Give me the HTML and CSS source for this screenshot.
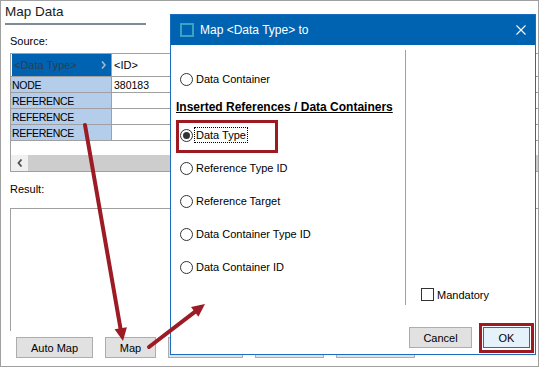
FILE: index.html
```html
<!DOCTYPE html>
<html>
<head>
<meta charset="utf-8">
<title>Map Data</title>
<link rel="stylesheet" href="styles.css">
</head>
<body>
<div class="window">
  <div class="win-title">Map Data</div>
  <div class="label source-label">Source:</div>
  <div class="grid">
    <div class="grid-row head">
      <div class="cell c1 sel">&lt;Data Type&gt;<svg class="chev" width="5" height="8" viewBox="0 0 5 8"><polyline points="1,0.5 4,4 1,7.5" fill="none" stroke="#a9b9cb" stroke-width="1.6"/></svg></div>
      <div class="cell c2">&lt;ID&gt;</div>
      <div class="cell c3">Type</div>
    </div>
    <div class="grid-row"><div class="cell c1 key">NODE</div><div class="cell c2">380183</div><div class="cell c3"></div></div>
    <div class="grid-row"><div class="cell c1 key">REFERENCE</div><div class="cell c2"></div><div class="cell c3"></div></div>
    <div class="grid-row"><div class="cell c1 key">REFERENCE</div><div class="cell c2"></div><div class="cell c3"></div></div>
    <div class="grid-row"><div class="cell c1 key">REFERENCE</div><div class="cell c2"></div><div class="cell c3"></div></div>
    <div class="grid-empty"></div>
    <div class="hscroll">
      <div class="hs-btn"><svg width="6" height="8" viewBox="0 0 6 8"><polyline points="4.5,0.5 1.5,4 4.5,7.5" fill="none" stroke="#505050" stroke-width="1.8"/></svg></div>
      <div class="hs-thumb"></div>
    </div>
  </div>
  <div class="label result-label">Result:</div>
  <div class="result-box"></div>
  <div class="btn-row">
    <button class="btn b-auto">Auto Map</button>
    <button class="btn b-map">Map</button>
    <button class="btn b-3"></button>
    <button class="btn b-4"></button>
    <button class="btn b-5"></button>
  </div>

  <div class="dialog">
    <div class="dlg-titlebar">
      <span class="dlg-icon"></span>
      <span class="dlg-title">Map &lt;Data Type&gt; to</span>
      <svg class="dlg-close" width="10" height="10" viewBox="0 0 10 10"><path d="M0.5 0.5 L9.5 9.5 M9.5 0.5 L0.5 9.5" stroke="#ffffff" stroke-width="1.1" fill="none"/></svg>
    </div>
    <div class="dlg-body">
      <div class="dlg-main">
        <div class="dlg-left">
          <div class="radio-row first"><span class="radio"></span><span class="rtext">Data Container</span></div>
          <div class="section-head">Inserted References / Data Containers</div>
          <div class="radio-row sel-row"><span class="radio checked"></span><span class="rtext focus">Data Type</span><span class="hl hl-radio"></span></div>
          <div class="radio-row"><span class="radio"></span><span class="rtext">Reference Type ID</span></div>
          <div class="radio-row"><span class="radio"></span><span class="rtext">Reference Target</span></div>
          <div class="radio-row"><span class="radio"></span><span class="rtext">Data Container Type ID</span></div>
          <div class="radio-row"><span class="radio"></span><span class="rtext">Data Container ID</span></div>
        </div>
        <div class="dlg-sep"></div>
        <div class="dlg-right">
          <div class="check-row"><span class="checkbox"></span><span class="rtext">Mandatory</span></div>
        </div>
      </div>
      <div class="dlg-foot">
        <button class="btn b-cancel">Cancel</button>
        <div class="ok-wrap"><button class="btn b-ok">OK</button><span class="hl hl-ok"></span></div>
      </div>
    </div>
  </div>

  <svg class="arrows" width="540" height="368" viewBox="0 0 540 368">
    <line x1="85" y1="125" x2="120.6" y2="329" stroke="#9c1b24" stroke-width="4" stroke-linecap="round"/>
    <polygon points="123,341 126.9,327.3 114.6,329.3" fill="#9c1b24"/>
    <line x1="149" y1="347" x2="195.5" y2="311.3" stroke="#9c1b24" stroke-width="4" stroke-linecap="round"/>
    <polygon points="205,304 198.4,316.8 191,307" fill="#9c1b24"/>
  </svg>
</div>
</body>
</html>
```

FILE: styles.css
```css
html, body {
  margin: 0;
  padding: 0;
  background: #ffffff;
}
body {
  font-family: "Liberation Sans", Arial, sans-serif;
  font-size: 11px;
  color: #000;
}
.window {
  position: relative;
  width: 539px;
  height: 367px;
  box-sizing: border-box;
  border: 1px solid #a0a0a0;
  background: #fff;
  overflow: hidden;
}
.win-title {
  margin: 3px 0 0 4px;
  width: 141px;
  font-size: 13.5px;
  line-height: 16px;
  padding-bottom: 3px;
  border-bottom: 2px solid #7d8a99;
  color: #1a1a1a;
}
.label {
  font-size: 11px;
  line-height: 13px;
  margin-left: 9px;
}
.source-label { margin-top: 10px; }
.result-label { margin-top: 11px; }

.grid {
  margin: 5px 0 0 9px;
  width: 528px;
  border-top: 1px solid #a0a0a0;
  border-left: 1px solid #a0a0a0;
  border-bottom: 1px solid #a0a0a0;
  font-size: 10.5px;
}
.grid-row {
  display: flex;
  height: 15px;
  border-bottom: 1px solid #a0a0a0;
}
.grid-row.head { height: 22px; font-size: 11px; }
.cell {
  display: flex;
  align-items: center;
  box-sizing: border-box;
  border-right: 1px solid #a0a0a0;
  padding-left: 1px;
  white-space: nowrap;
}
.c1 { width: 101px; }
.c1.key { letter-spacing: -0.3px; }
.c2 { width: 300px; padding-left: 2px; }
.c3 { flex: 1; padding-left: 3px; }
.cell.sel {
  background: #0063b1;
  color: #2b3c4e;
  padding-left: 2px;
  position: relative;
  border-left: 1px solid #fff;
}
.chev { position: absolute; right: 5px; top: 7px; }
.cell.key { background: #b4cdea; }
.grid-empty { height: 14px; }
.hscroll {
  display: flex;
  height: 16px;
}
.hs-btn {
  width: 17px;
  background: #f0f0f0;
  display: flex;
  align-items: center;
  justify-content: center;
}
.hs-thumb { flex: 1; background: #cdcdcd; }

.result-box {
  margin: 12px 0 0 9px;
  width: 528px;
  height: 123px;
  box-sizing: border-box;
  border-top: 1px solid #a0a0a0;
  border-left: 1px solid #a0a0a0;
}
.btn-row {
  display: flex;
  gap: 12px;
  margin-top: 6px;
  padding-left: 15px;
}
.btn {
  box-sizing: border-box;
  height: 21px;
  margin: 0;
  padding: 0;
  border: 1px solid #adadad;
  background: #e1e1e1;
  font-family: "Liberation Sans", Arial, sans-serif;
  font-size: 11px;
  color: #000;
}
.b-auto { width: 77px; }
.b-map { width: 51px; }
.b-3 { width: 75px; }
.b-4 { width: 69px; }
.b-5 { width: 79px; }

.dialog {
  position: absolute;
  left: 169px;
  top: 13px;
  width: 366px;
  height: 341px;
  box-sizing: border-box;
  border: 1px solid #1c6dbf;
  background: #fff;
  display: flex;
  flex-direction: column;
}
.dlg-titlebar {
  height: 30px;
  background: #0063b1;
  display: flex;
  align-items: center;
  padding: 0 9px;
  color: #fff;
}
.dlg-icon {
  width: 14px;
  height: 14px;
  box-sizing: border-box;
  border: 2px solid #3aa2c2;
  margin-top: -1px;
  margin-right: 6px;
}
.dlg-title {
  font-size: 12px;
  flex: 1;
}
.dlg-close { margin-top: -1px; }
.dlg-body {
  flex: 1;
  display: flex;
  flex-direction: column;
}
.dlg-main {
  display: flex;
  height: 264px;
}
.dlg-left {
  width: 234px;
  box-sizing: border-box;
  padding-left: 9px;
}
.radio-row {
  display: flex;
  align-items: center;
  height: 20px;
  margin-top: 13px;
  position: relative;
}
.radio-row.first { margin-top: 24px; }
.section-head {
  margin-top: 11px;
  margin-left: -4px;
  font-size: 12px;
  line-height: 15px;
  font-weight: bold;
  text-decoration: underline;
  white-space: nowrap;
}
.radio-row.sel-row { margin-top: 10px; }
.radio {
  width: 13px;
  height: 13px;
  box-sizing: border-box;
  border: 1px solid #333;
  border-radius: 50%;
  background: #fff;
  margin-right: 3px;
  display: flex;
  align-items: center;
  justify-content: center;
}
.radio.checked::after {
  content: "";
  width: 7px;
  height: 7px;
  border-radius: 50%;
  background: #333;
}
.rtext {
  line-height: 14px;
  white-space: nowrap;
}
.rtext.focus {
  outline: 1px dotted #000;
  padding: 0 1px;
  margin-left: -1px;
}
.hl {
  position: absolute;
  box-sizing: border-box;
  border: 3px solid #9e1a22;
  pointer-events: none;
}
.hl-radio {
  left: -4px;
  top: -5px;
  width: 102px;
  height: 33px;
}
.dlg-sep {
  width: 1px;
  background: #a0a0a0;
  margin: 5px 0 4px 0;
}
.dlg-right {
  flex: 1;
  display: flex;
  flex-direction: column;
  justify-content: flex-end;
  padding: 0 0 7px 15px;
}
.check-row {
  display: flex;
  align-items: center;
  height: 15px;
}
.checkbox {
  width: 13px;
  height: 13px;
  box-sizing: border-box;
  border: 1px solid #333;
  background: #fff;
  margin-right: 3px;
}
.dlg-foot {
  display: flex;
  justify-content: flex-end;
  gap: 11px;
  padding: 18px 5px 0 0;
}
.b-cancel { width: 63px; }
.ok-wrap { position: relative; }
.b-ok {
  width: 47px;
  border: 1px solid #0078d7;
  background: #e5f1fb;
}
.hl-ok {
  left: -4px;
  top: -4px;
  width: 55px;
  height: 30px;
}
.arrows {
  position: absolute;
  left: -1px;
  top: -1px;
  pointer-events: none;
}
```
